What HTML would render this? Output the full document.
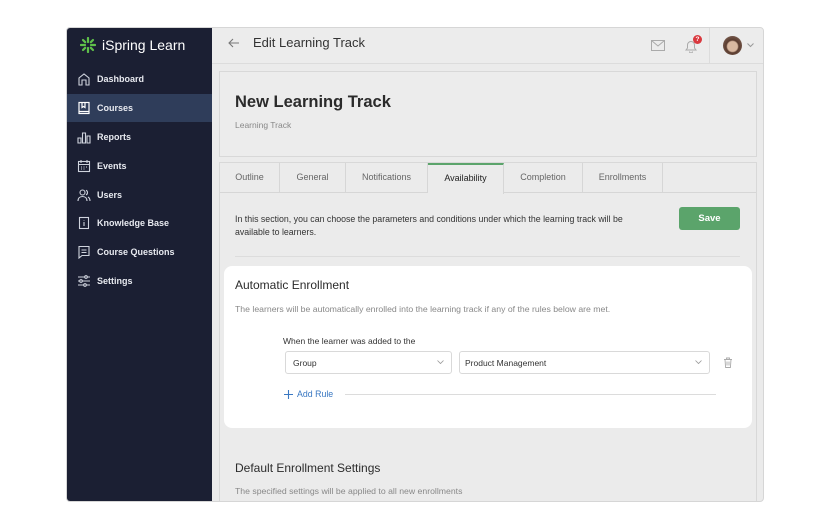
<!DOCTYPE html><html><head><style>
*{box-sizing:border-box;margin:0;padding:0}
body{width:830px;height:530px;background:#fff;font-family:"Liberation Sans",sans-serif;position:relative;overflow:hidden}
.win{position:absolute;left:66px;top:27px;width:698px;height:475px;border:1px solid #d6d6d6;border-radius:4px;overflow:hidden;background:#ebebeb}
.sb{position:absolute;left:0;top:0;width:145px;height:100%;background:#1b1f33;color:#fff}
.logo{position:absolute;left:13px;top:9px;font-size:14px;color:#fff;display:flex;align-items:center;gap:6px}
.it{position:absolute;left:0;width:145px;height:28px;font-size:9px;font-weight:bold;color:#e8eaf0;display:flex;align-items:center;padding-left:30px}
.it svg{position:absolute;left:10px;top:7px}
.act{background:#2f3d5a}
.abs{position:absolute}
.t{position:absolute;white-space:nowrap}
</style></head><body>
<div class="win">
<div class="sb">
<div class="logo"><svg width="16" height="16" viewBox="0 0 16 16"><g stroke="#5fbf4a" stroke-width="2.2" stroke-linecap="round"><line x1="8" y1="1" x2="8" y2="5"/><line x1="8" y1="11" x2="8" y2="15"/><line x1="1" y1="8" x2="5" y2="8"/><line x1="11" y1="8" x2="15" y2="8"/><line x1="3" y1="3" x2="5.2" y2="5.2"/><line x1="10.8" y1="10.8" x2="13" y2="13"/><line x1="13" y1="3" x2="10.8" y2="5.2"/><line x1="5.2" y1="10.8" x2="3" y2="13"/></g></svg><span>iSpring Learn</span></div>
<div class="it" style="top:37px"><svg width="14" height="14" viewBox="0 0 14 14" fill="none" stroke="#cfd3dd" stroke-width="1.1"><path d="M2 13V6l5-4 5 4v7H9V8H5v5z"/></svg>Dashboard</div>
<div class="it act" style="top:66px"><svg width="14" height="14" viewBox="0 0 14 14" fill="none" stroke="#fff" stroke-width="1.2"><rect x="2" y="1.5" width="10" height="11"/><path d="M5 1.5v5l1.5-1 1.5 1v-5M2 10.5h10"/></svg>Courses</div>
<div class="it" style="top:95px"><svg width="14" height="14" viewBox="0 0 14 14" fill="none" stroke="#cfd3dd" stroke-width="1.1"><path d="M1 13V8h3v5zM5.5 13V3h3v10zM10 13V6h3v7z"/></svg>Reports</div>
<div class="it" style="top:124px"><svg width="14" height="14" viewBox="0 0 14 14" fill="none" stroke="#cfd3dd" stroke-width="1.1"><rect x="1.5" y="2.5" width="11" height="10"/><path d="M1.5 5.5h11M4 1v3M10 1v3M4 8h1M6.5 8h1M9 8h1M4 10h1M6.5 10h1"/></svg>Events</div>
<div class="it" style="top:153px"><svg width="14" height="14" viewBox="0 0 14 14" fill="none" stroke="#cfd3dd" stroke-width="1.1"><circle cx="5.5" cy="4.5" r="2.5"/><path d="M1 13c0-3 2-4.5 4.5-4.5S10 10 10 13M9 2.3a2.5 2.5 0 010 4.6M11 9c1.3.7 2 2 2 4"/></svg>Users</div>
<div class="it" style="top:181px"><svg width="14" height="14" viewBox="0 0 14 14" fill="none" stroke="#cfd3dd" stroke-width="1.1"><rect x="2.5" y="1.5" width="9" height="11"/><path d="M7 6v4M7 4.2v.6"/></svg>Knowledge Base</div>
<div class="it" style="top:210px"><svg width="14" height="14" viewBox="0 0 14 14" fill="none" stroke="#cfd3dd" stroke-width="1.1"><path d="M2 1.5h10v9H5l-3 2.5z"/><path d="M4.5 5h5M4.5 7.5h5"/></svg>Course Questions</div>
<div class="it" style="top:239px"><svg width="14" height="14" viewBox="0 0 14 14" fill="none" stroke="#cfd3dd" stroke-width="1.1"><path d="M1 3h12M1 7h12M1 11h12"/><circle cx="9" cy="3" r="1.3" fill="#1b1f33"/><circle cx="4" cy="7" r="1.3" fill="#1b1f33"/><circle cx="8" cy="11" r="1.3" fill="#1b1f33"/></svg>Settings</div>
</div>
<div class="abs" style="left:145px;top:0;width:553px;height:36px;background:#ececec;border-bottom:1px solid #dcdcdc"></div>
<svg class="abs" style="left:161px;top:9px" width="12" height="12" viewBox="0 0 12 12" fill="none" stroke="#777" stroke-width="1.1"><path d="M11 6H1M5 2L1 6l4 4"/></svg>
<div class="t" style="left:186px;top:7px;font-size:13px;color:#333">Edit Learning Track</div>
<svg class="abs" style="left:584px;top:12px" width="14" height="11" viewBox="0 0 14 11" fill="none" stroke="#aaa" stroke-width="1"><rect x=".5" y=".5" width="13" height="10"/><path d="M.5 .5l6.5 5.5 6.5-5.5"/></svg>
<svg class="abs" style="left:617px;top:11px" width="14" height="14" viewBox="0 0 14 14" fill="none" stroke="#aaa" stroke-width="1"><path d="M2 11h10l-1.5-2V6a3.5 3.5 0 00-7 0v3zM5.5 12.5a1.5 1.5 0 003 0"/></svg>
<div class="abs" style="left:626px;top:7px;width:9px;height:9px;border-radius:50%;background:#d9393f;color:#fff;font-size:6.5px;text-align:center;line-height:9px;font-weight:bold">?</div>
<div class="abs" style="left:642px;top:0;width:1px;height:36px;background:#dcdcdc"></div>
<div class="abs" style="left:656px;top:8px;width:19px;height:19px;border-radius:50%;background:radial-gradient(circle at 50% 55%,#d9b8a0 0 35%,#5a3b2e 45%,#8a6f62 100%)"></div>
<svg class="abs" style="left:680px;top:15px" width="7" height="5" viewBox="0 0 7 5" fill="none" stroke="#999"><path d="M.5 .5l3 3 3-3"/></svg>
<div class="abs" style="left:152px;top:43px;width:538px;height:86px;border:1px solid #d8d8d8;background:#ececec"></div>
<div class="t" style="left:168px;top:65px;font-size:16.5px;font-weight:bold;color:#2b2b2b">New Learning Track</div>
<div class="t" style="left:168px;top:92px;font-size:8.5px;color:#888">Learning Track</div>
<div class="abs" style="left:152px;top:134px;width:538px;height:345px;border:1px solid #d8d8d8;background:#ebebeb"></div>
<div class="abs" style="left:153px;top:135px;width:536px;height:30px;border-bottom:1px solid #d6d6d6"></div>
<div class="abs" style="left:153px;top:135px;height:30px;display:flex;font-size:9px;color:#666">
<div style="width:60px;border-right:1px solid #d6d6d6;text-align:center;line-height:29px">Outline</div>
<div style="width:66px;border-right:1px solid #d6d6d6;text-align:center;line-height:29px">General</div>
<div style="width:82px;border-right:1px solid #d6d6d6;text-align:center;line-height:29px">Notifications</div>
<div style="width:76px;border-right:1px solid #d6d6d6;border-top:2px solid #5ba46b;text-align:center;line-height:27px;color:#222;background:#ebebeb;height:31px">Availability</div>
<div style="width:79px;border-right:1px solid #d6d6d6;text-align:center;line-height:29px">Completion</div>
<div style="width:80px;border-right:1px solid #d6d6d6;text-align:center;line-height:29px">Enrollments</div>
</div>
<div class="t" style="left:168px;top:185px;font-size:8.8px;color:#333;line-height:13px">In this section, you can choose the parameters and conditions under which the learning track will be<br>available to learners.</div>
<div class="abs" style="left:612px;top:179px;width:61px;height:23px;background:#5ba46b;border-radius:3px;color:#fff;font-size:9.5px;font-weight:bold;text-align:center;line-height:23px">Save</div>
<div class="abs" style="left:168px;top:228px;width:505px;height:1px;background:#dcdcdc"></div>
<div class="abs" style="left:157px;top:238px;width:528px;height:162px;background:#fff;border-radius:8px"></div>
<div class="t" style="left:168px;top:250px;font-size:12px;color:#2b2b2b">Automatic Enrollment</div>
<div class="t" style="left:168px;top:276px;font-size:8.7px;color:#888">The learners will be automatically enrolled into the learning track if any of the rules below are met.</div>
<div class="t" style="left:216px;top:308px;font-size:8.5px;color:#333">When the learner was added to the</div>
<div class="abs" style="left:218px;top:323px;width:167px;height:23px;border:1px solid #d9d9d9;border-radius:3px"></div>
<div class="t" style="left:226px;top:330px;font-size:8.5px;color:#333">Group</div>
<svg class="abs" style="left:370px;top:332px" width="7" height="5" viewBox="0 0 7 5" fill="none" stroke="#999" stroke-width=".8"><path d="M.5 .5l3 3 3-3"/></svg>
<div class="abs" style="left:392px;top:323px;width:251px;height:23px;border:1px solid #d9d9d9;border-radius:3px"></div>
<div class="t" style="left:398px;top:330px;font-size:8.5px;color:#333">Product Management</div>
<svg class="abs" style="left:628px;top:332px" width="7" height="5" viewBox="0 0 7 5" fill="none" stroke="#999" stroke-width=".8"><path d="M.5 .5l3 3 3-3"/></svg>
<svg class="abs" style="left:656px;top:329px" width="10" height="11" viewBox="0 0 10 11" fill="none" stroke="#aaa" stroke-width=".9"><path d="M1 2.5h8M3.5 2.5V1h3v1.5M2 2.5l.6 8h4.8l.6-8M4 4.5v4M6 4.5v4"/></svg>
<svg class="abs" style="left:217px;top:362px" width="9" height="9" viewBox="0 0 9 9" stroke="#3a78c2" stroke-width="1.1"><path d="M4.5 0v9M0 4.5h9"/></svg>
<div class="t" style="left:230px;top:361px;font-size:8.8px;color:#3a78c2">Add Rule</div>
<div class="abs" style="left:278px;top:366px;width:371px;height:1px;background:#dcdcdc"></div>
<div class="t" style="left:168px;top:433px;font-size:12px;color:#2b2b2b">Default Enrollment Settings</div>
<div class="t" style="left:168px;top:458px;font-size:8.7px;color:#888">The specified settings will be applied to all new enrollments</div>
</div>
</body></html>
